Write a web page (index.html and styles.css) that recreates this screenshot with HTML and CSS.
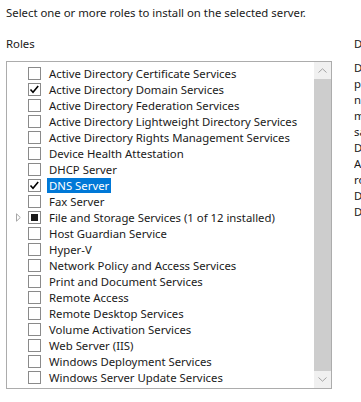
FILE: index.html
```html
<!DOCTYPE html>
<html>
<head>
<meta charset="utf-8">
<link rel="stylesheet" href="styles.css">
</head>
<body>
<p class="intro">Select one or more roles to install on the selected server.</p>
<div class="columns">
  <div class="roles">
    <div class="heading">Roles</div>
    <div class="listbox">
      <ul class="items">
        <li class="row"><span class="exp"></span><span class="cb"></span><span class="label">Active Directory Certificate Services</span></li>
        <li class="row"><span class="exp"></span><span class="cb"><svg viewBox="0 0 13 13" width="13" height="13"><path d="M2.5 6.5 L5 9.2 L10.2 3" fill="none" stroke="#000" stroke-width="1.6"/></svg></span><span class="label">Active Directory Domain Services</span></li>
        <li class="row"><span class="exp"></span><span class="cb"></span><span class="label">Active Directory Federation Services</span></li>
        <li class="row"><span class="exp"></span><span class="cb"></span><span class="label">Active Directory Lightweight Directory Services</span></li>
        <li class="row"><span class="exp"></span><span class="cb"></span><span class="label">Active Directory Rights Management Services</span></li>
        <li class="row"><span class="exp"></span><span class="cb"></span><span class="label">Device Health Attestation</span></li>
        <li class="row"><span class="exp"></span><span class="cb"></span><span class="label">DHCP Server</span></li>
        <li class="row"><span class="exp"></span><span class="cb"><svg viewBox="0 0 13 13" width="13" height="13"><path d="M2.5 6.5 L5 9.2 L10.2 3" fill="none" stroke="#000" stroke-width="1.6"/></svg></span><span class="label selected">DNS Server</span></li>
        <li class="row"><span class="exp"></span><span class="cb"></span><span class="label">Fax Server</span></li>
        <li class="row"><span class="exp"><svg viewBox="0 0 5 9" width="5" height="9"><path d="M0.5 0.8 L4.3 4.5 L0.5 8.2 Z" fill="none" stroke="#a6a6a6" stroke-width="1"/></svg></span><span class="cb"><span class="partial"></span></span><span class="label">File and Storage Services (1 of 12 installed)</span></li>
        <li class="row"><span class="exp"></span><span class="cb"></span><span class="label">Host Guardian Service</span></li>
        <li class="row"><span class="exp"></span><span class="cb"></span><span class="label">Hyper-V</span></li>
        <li class="row"><span class="exp"></span><span class="cb"></span><span class="label">Network Policy and Access Services</span></li>
        <li class="row"><span class="exp"></span><span class="cb"></span><span class="label">Print and Document Services</span></li>
        <li class="row"><span class="exp"></span><span class="cb"></span><span class="label">Remote Access</span></li>
        <li class="row"><span class="exp"></span><span class="cb"></span><span class="label">Remote Desktop Services</span></li>
        <li class="row"><span class="exp"></span><span class="cb"></span><span class="label">Volume Activation Services</span></li>
        <li class="row"><span class="exp"></span><span class="cb"></span><span class="label">Web Server (IIS)</span></li>
        <li class="row"><span class="exp"></span><span class="cb"></span><span class="label">Windows Deployment Services</span></li>
        <li class="row"><span class="exp"></span><span class="cb"></span><span class="label">Windows Server Update Services</span></li>
      </ul>
      <div class="scrollbar">
        <div class="arrow"><svg viewBox="0 0 9 5" width="9" height="5"><path d="M0.5 4.5 L4.5 0.8 L8.5 4.5" fill="none" stroke="#a3a3a3" stroke-width="1"/></svg></div>
        <div class="thumb"></div>
        <div class="arrow"><svg viewBox="0 0 9 5" width="9" height="5"><path d="M0.5 0.5 L4.5 4.2 L8.5 0.5" fill="none" stroke="#a3a3a3" stroke-width="1"/></svg></div>
      </div>
    </div>
  </div>
  <div class="desc">
    <div class="heading">Description</div>
    <div class="desc-text">
      <div>Domain Name System (DNS) Server</div>
      <div>provides name resolution for TCP/IP</div>
      <div>networks. DNS Server is easier to</div>
      <div>manage when it is installed on the</div>
      <div>same server as Active Directory</div>
      <div>Domain Services. If you select the</div>
      <div>Active Directory Domain Services</div>
      <div>role, you can install and configure</div>
      <div>DNS Server and Active Directory</div>
      <div>Domain Services to work together.</div>
    </div>
  </div>
</div>
</body>
</html>
```
FILE: styles.css
```css
html, body {
  margin: 0;
  padding: 0;
  background: #fff;
}
body {
  width: 361px;
  height: 402px;
  overflow: hidden;
  font-family: "Noto Sans", "Liberation Sans", sans-serif;
  font-size: 11.35px;
  line-height: 16px;
  color: #1a1a1a;
}
.intro {
  margin: 0;
  padding: 5px 6px 0;
  white-space: nowrap;
}
.columns {
  display: flex;
  margin-top: 15px;
}
.roles {
  margin-left: 6px;
  width: 326px;
  flex: none;
}
.heading {
  white-space: nowrap;
}
.listbox {
  margin-top: 9px;
  border: 1px solid #acacac;
  height: 326px;
  display: flex;
}
.items {
  list-style: none;
  margin: 0;
  padding: 3px 0 0;
  flex: 1;
  min-width: 0;
  overflow: hidden;
}
.row {
  display: flex;
  align-items: center;
  height: 16px;
  white-space: nowrap;
}
.exp {
  width: 21px;
  flex: none;
  display: flex;
  align-items: center;
  padding-left: 9px;
  box-sizing: border-box;
}
.exp svg { display: block; }
.cb {
  width: 13px;
  height: 13px;
  box-sizing: border-box;
  border: 1px solid #8a8a8a;
  background: #fff;
  flex: none;
  margin-right: 6px;
  position: relative;
  display: flex;
  align-items: center;
  justify-content: center;
}
.cb svg {
  position: absolute;
  left: -1px;
  top: -1px;
}
.partial {
  width: 7px;
  height: 7px;
  background: #1a1a1a;
}
.label {
  padding: 0 2px;
  line-height: 15px;
}
.label.selected {
  background: #0078d7;
  color: #fff;
}
.scrollbar {
  width: 17px;
  flex: none;
  display: flex;
  flex-direction: column;
  background: #f0f0f0;
}
.arrow {
  height: 17px;
  flex: none;
  display: flex;
  align-items: center;
  justify-content: center;
  background: #f0f0f0;
}
.thumb {
  flex: 1;
  background: #cdcdcd;
}
.desc {
  margin-left: 22px;
  flex: 1;
  min-width: 0;
  overflow: hidden;
}
.desc-text {
  margin-top: 8px;
  white-space: nowrap;
}
```
